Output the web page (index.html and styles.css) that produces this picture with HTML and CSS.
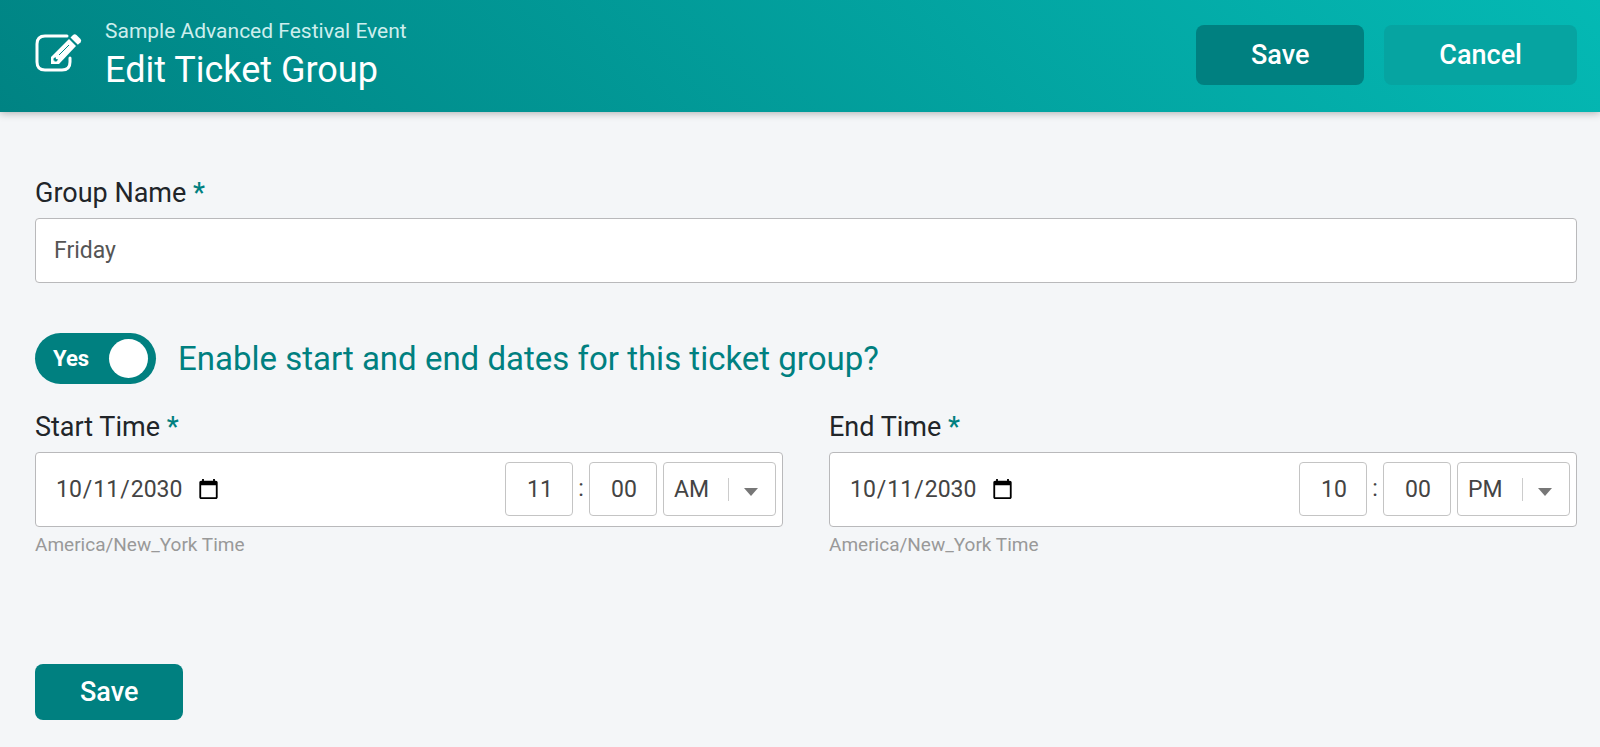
FILE: index.html
```
<!DOCTYPE html>
<html lang="en">
<head>
	<meta charset="UTF-8">
	<meta name="viewport" content="width=device-width, initial-scale=1">
	<title>Edit Ticket Group</title>
	<link rel="stylesheet" href="styles.css">
</head>
<body>
	<header class="header">
		<svg class="header_icon" viewBox="0 0 48 40" aria-hidden="true">
			<path class="line" d="M32 3H10Q2 3 2 11V29Q2 37 10 37H27Q35 37 35 29V25"/>
			<path class="fill" d="M16 24L34 6L41 13L24 31H16Z"/>
			<path class="fill" d="M35.500 4.500L38 2Q39.800 .6 41.500 2L45.500 6Q47 7.800 45.500 9.500L42.800 11.800Z"/>
			<path class="cut" d="M24 22L34 12"/>
			<path class="hole" d="M18.500 25.500L20.500 24L21 26L23.200 26.500L21.500 28.500H19.500V27.500H18.500Z"/>
		</svg>
		<div class="titles">
			<p class="event">Sample Advanced Festival Event</p>
			<h1>Edit Ticket Group</h1>
		</div>
		<div class="actions">
			<button class="btn btn_top" type="submit" form="group">Save</button>
			<button class="btn btn_cancel" type="button">Cancel</button>
		</div>
	</header>

	<form class="main" id="group">
		<div class="field">
			<label class="label" for="name">Group Name <span class="req">*</span></label>
			<input class="text" id="name" type="text" value="Friday" required>
		</div>

		<label class="switch">
			<span class="toggle">
				<input class="toggle_input" type="checkbox" checked>
				<span class="toggle_text">Yes</span>
			</span>
			Enable start and end dates for this ticket group?
		</label>

		<div class="times">
			<div class="field">
				<label class="label" for="start">Start Time <span class="req">*</span></label>
				<div class="datetime">
					<input class="date" id="start" type="date" value="2030-10-11" required>
					<input class="num" type="text" value="11" aria-label="Start hour">
					<span class="colon">:</span>
					<input class="num" type="text" value="00" aria-label="Start minute">
					<div class="ampm">
						<select aria-label="Start AM or PM">
							<option selected>AM</option>
							<option>PM</option>
						</select>
					</div>
				</div>
				<p class="zone">America/New_York Time</p>
			</div>
			<div class="field">
				<label class="label" for="end">End Time <span class="req">*</span></label>
				<div class="datetime">
					<input class="date" id="end" type="date" value="2030-10-11" required>
					<input class="num" type="text" value="10" aria-label="End hour">
					<span class="colon">:</span>
					<input class="num" type="text" value="00" aria-label="End minute">
					<div class="ampm">
						<select aria-label="End AM or PM">
							<option>AM</option>
							<option selected>PM</option>
						</select>
					</div>
				</div>
				<p class="zone">America/New_York Time</p>
			</div>
		</div>

		<button class="btn btn_save" type="submit">Save</button>
	</form>
</body>
</html>
```
FILE: styles.css
```
*{margin:0;padding:0;box-sizing:border-box;}
body{background:#f4f6f8;color:#212529;font-family:Roboto,"Liberation Sans",sans-serif;}
input,select,button{font:inherit;color:inherit;}

.header{display:flex;align-items:center;padding:16px 23px 18px 35px;background:linear-gradient(45deg,#008383,#04b9b4);color:#fff;box-shadow:0 1px 8px rgba(0,0,0,0.3);}
.header_icon{width:48px;height:40px;flex:none;margin-bottom:4px;}
.header_icon .line{fill:none;stroke:#fff;stroke-width:3;stroke-linecap:round;}
.header_icon .fill{fill:#fff;}
.header_icon .cut{fill:none;stroke:#008787;stroke-width:1;}
.header_icon .hole{fill:#008787;}
.titles{flex:1;padding-left:22px;}
.event{font-size:21px;line-height:30px;color:#cdeeed;}
.titles h1{font-size:36px;line-height:48px;font-weight:400;}
.actions{display:flex;gap:20px;}

.btn{border:none;border-radius:8px;background:#008080;color:#fff;font-size:27px;line-height:32px;font-weight:500;cursor:pointer;}
.btn_top{padding:14px 55px;}
.btn_cancel{padding:14px 55px;background:#06a4a1;}
.btn_save{padding:12px 45px;}

.main{padding:65px 23px 27px 35px;}
.label{display:block;font-size:27px;line-height:32px;margin-bottom:9px;}
.req{color:#008080;font-weight:500;}
.text{display:block;width:100%;height:65px;padding:0 18px;border:1px solid #b9b9bb;border-radius:4px;background:#fff;color:#555;font-size:23px;}

.switch{display:flex;align-items:center;gap:22px;margin:50px 0 27px;font-size:33px;line-height:51px;color:#008080;}
.toggle{display:grid;align-items:center;width:121px;height:51px;}
.toggle_input,.toggle_text{grid-area:1/1;}
.toggle_input{appearance:none;display:flex;align-items:center;height:51px;padding:6px 8px;border-radius:26px;background:#999;}
.toggle_input::before{content:"";width:39px;height:39px;border-radius:50%;background:#fff;}
.toggle_input:checked{justify-content:flex-end;background:#008080;}
.toggle_text{padding:0 0 0 18px;color:#fff;font-size:22px;font-weight:700;}

.times{display:grid;grid-template-columns:1fr 1fr;gap:46px;margin-bottom:107px;}
.datetime{display:flex;align-items:center;height:75px;padding:0 6px 2px 19px;border:1px solid #b9b9bb;border-radius:4px;background:#fff;color:#444;font-size:23px;}
.date{width:167px;padding-top:2px;border:none;background:none;outline:none;margin-right:auto;}
.date::-webkit-calendar-picker-indicator{margin-left:0;}
.num{width:68px;height:54px;padding:2px 0 0 2px;border:1px solid #c4c4c4;border-radius:4px;text-align:center;}
.colon{width:16px;text-align:center;}
.ampm{position:relative;width:113px;height:54px;margin-left:6px;}
.ampm select{appearance:none;width:100%;height:54px;padding:2px 0 0 10px;border:1px solid #c4c4c4;border-radius:4px;background:#fff;}
.ampm::before{content:"";position:absolute;top:16px;right:47px;height:23px;border-left:1px solid #ccc;}
.ampm::after{content:"";position:absolute;top:26px;right:18px;border:7px solid transparent;border-top:8px solid #777;border-bottom:none;}
.zone{font-size:19px;line-height:24px;margin-top:6px;color:#999;}
```
